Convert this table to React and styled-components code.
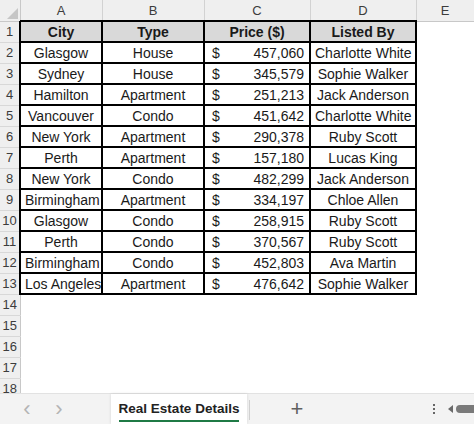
import React from 'react';
import styled, { createGlobalStyle } from 'styled-components';

const GlobalStyle = createGlobalStyle`
	html, body {
		margin: 0;
		padding: 0;
		background: #ffffff;
		overflow: hidden;
	}
	body {
		font-family: "Liberation Sans", Arial, sans-serif;
	}
`;

const rows = [
	['Glasgow', 'House', '457,060', 'Charlotte White'],
	['Sydney', 'House', '345,579', 'Sophie Walker'],
	['Hamilton', 'Apartment', '251,213', 'Jack Anderson'],
	['Vancouver', 'Condo', '451,642', 'Charlotte White'],
	['New York', 'Apartment', '290,378', 'Ruby Scott'],
	['Perth', 'Apartment', '157,180', 'Lucas King'],
	['New York', 'Condo', '482,299', 'Jack Anderson'],
	['Birmingham', 'Apartment', '334,197', 'Chloe Allen'],
	['Glasgow', 'Condo', '258,915', 'Ruby Scott'],
	['Perth', 'Condo', '370,567', 'Ruby Scott'],
	['Birmingham', 'Condo', '452,803', 'Ava Martin'],
	['Los Angeles', 'Apartment', '476,642', 'Sophie Walker'],
];

const columns = ['A', 'B', 'C', 'D', 'E'];
const widths = [20, 82, 102, 106, 106, 58];
const emptyRows = [14, 15, 16, 17, 18];

export default function App() {
	return (
		<>
			<GlobalStyle />
			<Sheet>
				<GridArea>
					<Grid>
						<colgroup>
							{widths.map((w, i) => (
								<col key={i} style={{ width: w }} />
							))}
						</colgroup>
						<thead>
							<tr>
								<Corner>
									<CornerMark />
								</Corner>
								{columns.map((c) => (
									<ColHead key={c}>{c}</ColHead>
								))}
							</tr>
						</thead>
						<tbody>
							<tr>
								<RowHead>1</RowHead>
								<TitleCell>City</TitleCell>
								<TitleCell>Type</TitleCell>
								<TitleCell>Price ($)</TitleCell>
								<TitleCell>Listed By</TitleCell>
								<Blank />
							</tr>
							{rows.map((r, i) => (
								<tr key={i}>
									<RowHead>{i + 2}</RowHead>
									<DataCell>{r[0]}</DataCell>
									<DataCell>{r[1]}</DataCell>
									<DataCell>
										<Money>
											<span>$</span>
											<span>{r[2]}</span>
										</Money>
									</DataCell>
									<DataCell>{r[3]}</DataCell>
									<Blank />
								</tr>
							))}
							{emptyRows.map((n) => (
								<tr key={n}>
									<RowHead>{n}</RowHead>
									<Blank />
									<Blank />
									<Blank />
									<Blank />
									<Blank />
								</tr>
							))}
						</tbody>
					</Grid>
				</GridArea>
				<TabBar>
					<NavArrow>&#8249;</NavArrow>
					<NavArrow>&#8250;</NavArrow>
					<SheetTab>
						<TabLabel>Real Estate Details</TabLabel>
					</SheetTab>
					<TabDivider />
					<AddSheet>+</AddSheet>
					<Dots>
						<i />
						<i />
						<i />
					</Dots>
					<ScrollLeft />
					<ScrollThumb />
				</TabBar>
			</Sheet>
		</>
	);
}

const Sheet = styled.div`
	width: 474px;
	height: 424px;
	display: flex;
	flex-direction: column;
	overflow: hidden;
`;

const GridArea = styled.div`
	flex: 1;
	overflow: hidden;
`;

const Grid = styled.table`
	table-layout: fixed;
	border-collapse: collapse;
	width: 474px;
	font-size: 14px;
	color: #1a1a1a;
	tr {
		height: 21px;
	}
	td, th {
		padding: 0;
		white-space: nowrap;
		overflow: hidden;
	}
`;

const Corner = styled.th`
	background: #efefef;
	border-right: 1px solid #c8c8c8;
	border-bottom: 1px solid #c8c8c8;
	position: relative;
	height: 20px;
`;

const CornerMark = styled.div`
	position: absolute;
	right: 2px;
	bottom: 2px;
	width: 0;
	height: 0;
	border-left: 11px solid transparent;
	border-bottom: 11px solid #c6c6c6;
`;

const ColHead = styled.th`
	background: #efefef;
	border-right: 1px solid #d2d2d2;
	border-bottom: 1px solid #c8c8c8;
	font-weight: normal;
	font-size: 13px;
	color: #3c3c3c;
	text-align: center;
`;

const RowHead = styled.td`
	background: #efefef;
	border-right: 1px solid #c8c8c8;
	border-bottom: 1px solid #d8d8d8;
	font-size: 13px;
	color: #3c3c3c;
	text-align: center;
	vertical-align: top;
	line-height: 19px;
`;

const DataCell = styled.td`
	border: 2px solid #000;
	text-align: center;
	padding: 0 4px !important;
`;

const TitleCell = styled(DataCell)`
	background: #d9d9d9;
	font-weight: bold;
`;

const Blank = styled.td``;

const Money = styled.div`
	display: flex;
	justify-content: space-between;
	padding: 0 1px 0 3px;
`;

const TabBar = styled.div`
	height: 30px;
	flex: none;
	background: #f3f3f3;
	border-top: 1px solid #e2e2e2;
	display: flex;
	align-items: stretch;
	color: #9a9a9a;
`;

const NavArrow = styled.div`
	width: 32px;
	display: flex;
	align-items: center;
	justify-content: center;
	font-size: 22px;
	color: #b4b4b4;
	&:first-child {
		margin-left: 11px;
	}
`;

const SheetTab = styled.div`
	margin-left: 36px;
	width: 136px;
	background: #ffffff;
	box-shadow: 0 0 3px rgba(0, 0, 0, 0.12);
	display: flex;
	align-items: center;
	justify-content: center;
`;

const TabLabel = styled.span`
	font-weight: bold;
	font-size: 13.5px;
	color: #222;
	padding-bottom: 2px;
	border-bottom: 2px solid #1f7a45;
	line-height: 18px;
	margin-top: 4px;
`;

const TabDivider = styled.div`
	width: 1px;
	background: #d0d0d0;
	margin: 6px 0 4px 2px;
`;

const AddSheet = styled.div`
	margin-left: 37px;
	width: 20px;
	display: flex;
	align-items: center;
	justify-content: center;
	font-size: 22px;
	font-weight: 300;
	color: #606060;
`;

const Dots = styled.div`
	margin-left: auto;
	width: 4px;
	display: flex;
	flex-direction: column;
	justify-content: center;
	align-items: center;
	gap: 2px;
	i {
		width: 2px;
		height: 2px;
		background: #666;
	}
`;

const ScrollLeft = styled.div`
	margin: auto 0 auto 12px;
	width: 0;
	height: 0;
	border-top: 4px solid transparent;
	border-bottom: 4px solid transparent;
	border-right: 5px solid #6a6a6a;
`;

const ScrollThumb = styled.div`
	margin: auto -6px auto 3px;
	width: 24px;
	height: 8px;
	border-radius: 4px;
	background: #7a7a7a;
`;
